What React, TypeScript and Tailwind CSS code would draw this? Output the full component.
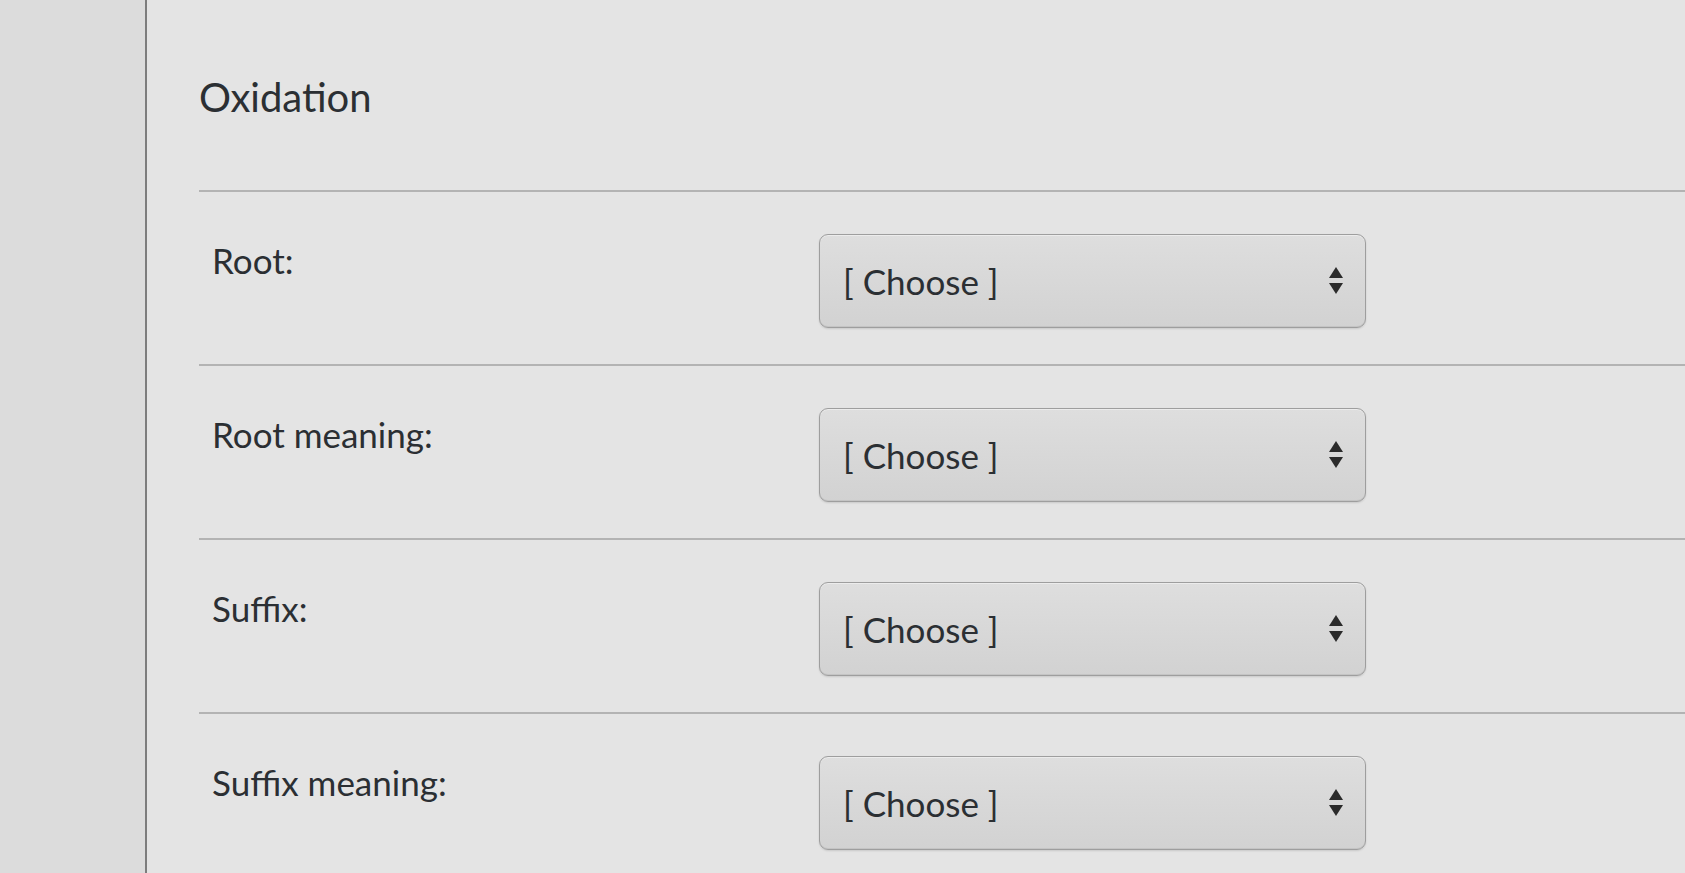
import React from "react";

const rows = ["Root:", "Root meaning:", "Suffix:", "Suffix meaning:"];

function Arrows() {
  return (
    <svg width="16" height="32" viewBox="0 0 16 32" className="shrink-0">
      <polygon points="8,2 15,13 1,13" fill="#2b2b2b" />
      <polygon points="1,18 15,18 8,29" fill="#2b2b2b" />
    </svg>
  );
}

function Select() {
  return (
    <div className="w-[547px] h-[94px] rounded-[9px] border border-[#9e9e9e] bg-gradient-to-b from-[#dedede] via-[#d8d8d8] to-[#d2d2d2] shadow-[inset_0_1px_0_#ececec,inset_0_-1px_0_#c4c4c4,0_1px_2px_rgba(0,0,0,0.12)] flex items-center justify-between pl-[23px] pr-[21px]">
      <span className="text-[35px] leading-[42px] text-[#2b2f33]">[ Choose ]</span>
      <Arrows />
    </div>
  );
}

export default function App() {
  return (
    <div
      className="w-[1685px] h-[873px] overflow-hidden flex bg-[#e4e4e4]"
      style={{ fontFamily: "Lato, 'Open Sans', sans-serif" }}
    >
      <div className="w-[147px] shrink-0 bg-[#dcdcdc] border-r-2 border-[#7d7d7d]" />
      <div className="flex-1 pl-[52px] pt-[73px]">
        <h1 className="text-[40px] leading-[48px] text-[#2b2f33] font-normal">Oxidation</h1>
        <div className="mt-[69px]">
          {rows.map((r) => (
            <div key={r} className="border-t-2 border-[#b3b3b3] pt-[42px] pb-[36px] pl-[13px] flex items-start">
              <div className="w-[607px] shrink-0 pt-[5px] text-[35px] leading-[42px] text-[#2b2f33]">{r}</div>
              <Select />
            </div>
          ))}
        </div>
      </div>
    </div>
  );
}
